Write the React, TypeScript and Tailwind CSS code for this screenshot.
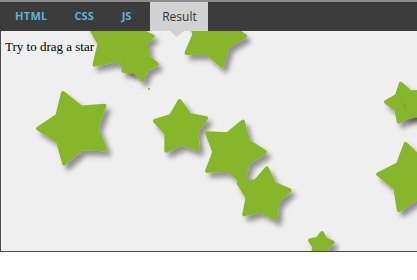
import React from 'react';

type Star = { x: number; y: number; r: number; rot: number };

// star centres are given in content-area coordinates (content starts at y=31)
const stars: Star[] = [
  { x: 212, y: 4, r: 32, rot: 20 },
  { x: 118, y: 10, r: 34, rot: 10 },
  { x: 138, y: 31, r: 18, rot: 25 },
  { x: 74, y: 97, r: 37, rot: -19 },
  { x: 180, y: 97, r: 27, rot: -3 },
  { x: 232, y: 121, r: 32, rot: 18 },
  { x: 262, y: 164, r: 27, rot: 8 },
  { x: 405, y: 72, r: 20, rot: -15 },
  { x: 418, y: 74, r: 18, rot: 10 },
  { x: 412, y: 147, r: 35, rot: -12 },
  { x: 320, y: 214, r: 12, rot: 5 },
];

function starPoints(s: Star, inner = 0.58) {
  const pts: string[] = [];
  for (let i = 0; i < 10; i++) {
    const rad = i % 2 === 0 ? s.r : s.r * inner;
    const a = ((-90 + s.rot + i * 36) * Math.PI) / 180;
    pts.push(`${(s.x + rad * Math.cos(a)).toFixed(1)},${(s.y + rad * Math.sin(a)).toFixed(1)}`);
  }
  return pts.join(' ');
}

export default function App() {
  return (
    <div className="w-[417px] h-[280px] bg-white overflow-hidden">
      <div className="relative z-10 h-[31px] bg-[#3c3c3c] border-t-2 border-[#8c8c8c] flex items-stretch">
        <div className="flex items-center text-[11px] font-bold text-[#5fb3d4]" style={{ fontFamily: '"Open Sans", "DejaVu Sans", sans-serif' }}>
          <span className="ml-[15px] tracking-[0.3px]">HTML</span>
          <span className="ml-[27px]">CSS</span>
          <span className="ml-[28px]">JS</span>
        </div>
        <div className="relative ml-[19px] w-[58px] bg-[#d2d2d2] flex items-center justify-center text-[12px] text-[#333]" style={{ fontFamily: '"Open Sans", "DejaVu Sans", sans-serif' }}>
          Result
          <div className="absolute left-[20px] top-full w-0 h-0 border-l-[7px] border-r-[7px] border-t-[6px] border-l-transparent border-r-transparent border-t-[#d2d2d2]" />
        </div>
      </div>
      <div className="relative h-[221px] bg-[#efefef] border-l border-b border-[#4a4a4a] overflow-hidden">
        <svg className="absolute left-0 top-0" width="417" height="221">
          <defs>
            <filter id="sh" x="-30%" y="-30%" width="160%" height="160%">
              <feDropShadow dx="4" dy="5" stdDeviation="2.5" floodColor="#000" floodOpacity="0.4" />
            </filter>
          </defs>
          {stars.map((s, i) => (
            <polygon
              key={i}
              points={starPoints(s)}
              fill="#87b62b"
              stroke="#87b62b"
              strokeWidth="4"
              strokeLinejoin="round"
              filter="url(#sh)"
            />
          ))}
          <circle cx="148" cy="58" r="1" fill="#87b62b" />
        </svg>
        <div className="relative pl-[4px] pt-[6px] text-[13px] text-black" style={{ fontFamily: '"Liberation Serif", serif' }}>
          Try to drag a star
        </div>
      </div>
    </div>
  );
}
